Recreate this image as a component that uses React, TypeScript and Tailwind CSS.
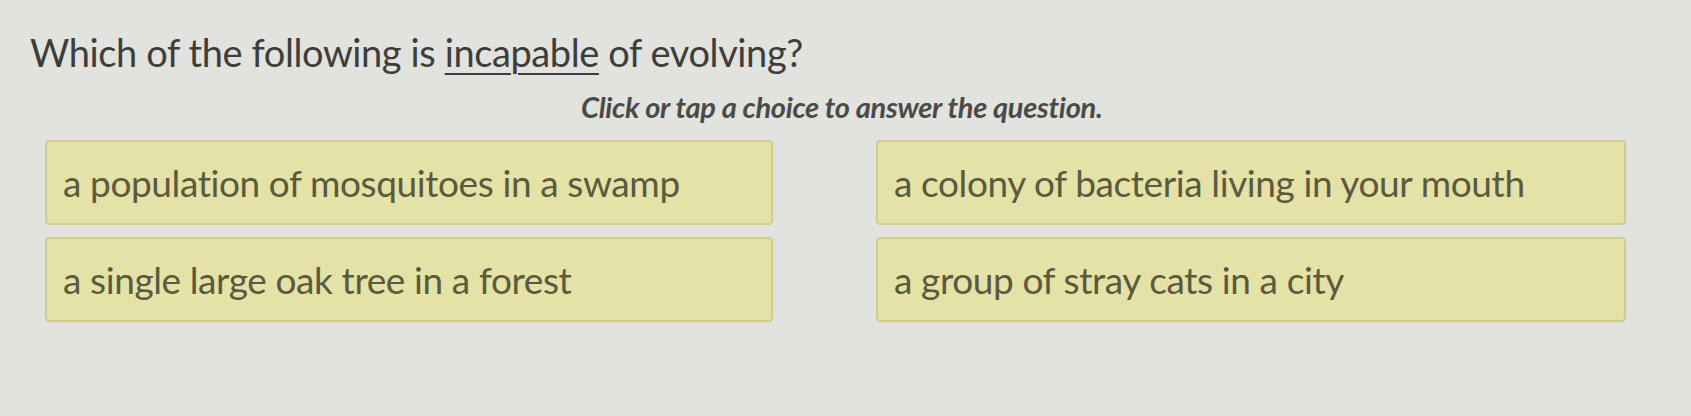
export default function App() {
  const left = ['a population of mosquitoes in a swamp', 'a single large oak tree in a forest'];
  const right = ['a colony of bacteria living in your mouth', 'a group of stray cats in a city'];

  return (
    <main
      className="w-full h-[416px] bg-[#e2e2de] overflow-hidden"
      style={{ fontFamily: 'Lato, "Open Sans", sans-serif' }}
    >
      <h1 className="pl-[30px] pt-[30px] text-[38px] leading-[44px] text-[#3d3d3b] tracking-[-0.4px]">
        Which of the following is <span className="underline decoration-2 underline-offset-[6px]">incapable</span> of evolving?
      </h1>

      <p className="mt-[19px] pl-[581px] text-[29px] leading-[28px] font-bold italic text-[#4a4a48] tracking-[-0.3px]">
        Click or tap a choice to answer the question.
      </p>

      <div className="mt-[19px] pl-[45px] grid grid-cols-[728px_750px] gap-x-[103px] gap-y-[12px]">
        {[left[0], right[0], left[1], right[1]].map((t) => (
          <button
            key={t}
            className="h-[85px] flex items-center px-[16px] text-left bg-[#e4e2a6] border-2 border-[#d2cd8f] rounded-[4px] text-[37px] text-[#5b5a3e] tracking-[-0.4px]"
          >
            {t}
          </button>
        ))}
      </div>
    </main>
  );
}
